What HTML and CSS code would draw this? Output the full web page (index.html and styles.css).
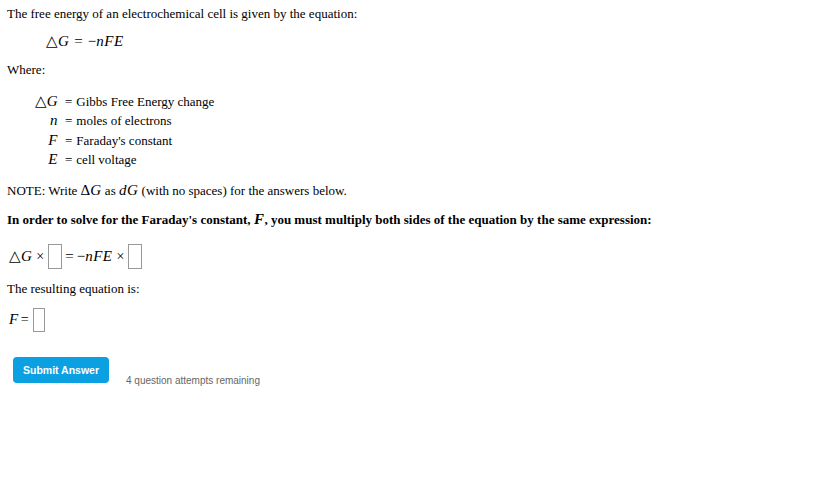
FILE: index.html
```html
<!DOCTYPE html>
<html>
<head>
<meta charset="utf-8">
<link rel="stylesheet" href="styles.css">
</head>
<body>
<div class="page">
  <p class="line first">The free energy of an electrochemical cell is given by the equation:</p>
  <div class="display"><span class="m">△<i>G</i></span><span class="op">=</span><span class="m">−<i>nFE</i></span></div>
  <p class="line where">Where:</p>
  <div class="defs">
    <div class="def"><span class="sym"><span class="m">△<i>G</i></span></span><span class="eq">=</span><span>Gibbs Free Energy change</span></div>
    <div class="def"><span class="sym"><i class="m">n</i></span><span class="eq">=</span><span>moles of electrons</span></div>
    <div class="def"><span class="sym"><i class="m">F</i></span><span class="eq">=</span><span>Faraday's constant</span></div>
    <div class="def"><span class="sym"><i class="m">E</i></span><span class="eq">=</span><span>cell voltage</span></div>
  </div>
  <p class="line note">NOTE: Write <span class="m">Δ<i>G</i></span> as <i class="m">dG</i> (with no spaces) for the answers below.</p>
  <p class="line bold">In order to solve for the Faraday's constant, <i class="m">F</i>, you must multiply both sides of the equation by the same expression:</p>
  <div class="answer-eq">
    <span class="m">△<i>G</i></span><span class="times">×</span><span class="box"></span><span class="op tight">=</span><span class="m">−<i class="sp">nFE</i></span><span class="times">×</span><span class="box"></span>
  </div>
  <p class="line result">The resulting equation is:</p>
  <div class="answer-eq f-eq">
    <i class="m">F</i><span class="op small">=</span><span class="box tall"></span>
  </div>
  <div class="actions">
    <button class="submit">Submit Answer</button>
    <span class="attempts">4 question attempts remaining</span>
  </div>
</div>
</body>
</html>
```
FILE: styles.css
```css
html, body {
  margin: 0;
  padding: 0;
  background: #fff;
}
.page {
  padding: 6px 7px;
  font-family: "Liberation Serif", "Times New Roman", serif;
  font-size: 13px;
  color: #000;
}
.line {
  margin: 0;
  line-height: 16px;
}
.m {
  font-family: "Liberation Serif", serif;
  font-size: 15px;
  line-height: 1;
}
.m i, i.m {
  font-style: italic;
  letter-spacing: 0.5px;
}
.display {
  margin: 12px 0 0 39px;
  line-height: 16px;
}
.op {
  font-size: 15px;
  line-height: 1;
  margin: 0 5px;
}
.where {
  margin-top: 12px;
}
.defs {
  margin-top: 16px;
  display: flex;
  flex-direction: column;
  gap: 3.3px;
}
.def {
  display: flex;
  align-items: baseline;
  line-height: 16px;
  height: 16px;
}
.sym {
  width: 51px;
  text-align: right;
}
.eq {
  margin: 0 4px 0 7px;
}
.note {
  margin-top: 15px;
}
.bold {
  margin-top: 13px;
  font-weight: bold;
}
.answer-eq {
  margin: 16px 0 0 2px;
  display: flex;
  align-items: center;
  height: 26px;
}
.times {
  margin: 0 4px 0 4px;
  font-size: 14px;
}
.box {
  display: inline-block;
  width: 12px;
  height: 23px;
  border: 1px solid #999;
}
.tight {
  margin: 0 3px 0 3px;
}
.result {
  margin-top: 11px;
}
.f-eq {
  margin-top: 10px;
}
.f-eq .small {
  margin: 0 4px 0 2px;
  font-size: 14px;
}
.box.tall {
  width: 10px;
  height: 22px;
}
.actions {
  margin: 24px 0 0 6px;
  display: flex;
  align-items: flex-end;
  gap: 17px;
}
.submit {
  width: 96px;
  height: 26px;
  border: none;
  border-radius: 4px;
  background: #0ba0e2;
  color: #fff;
  font-family: "Liberation Sans", Arial, sans-serif;
  font-size: 10.5px;
  font-weight: bold;
  padding: 0;
}
.attempts {
  font-family: "Liberation Sans", Arial, sans-serif;
  font-size: 10px;
  color: #666;
  margin-bottom: -3px;
}
```
